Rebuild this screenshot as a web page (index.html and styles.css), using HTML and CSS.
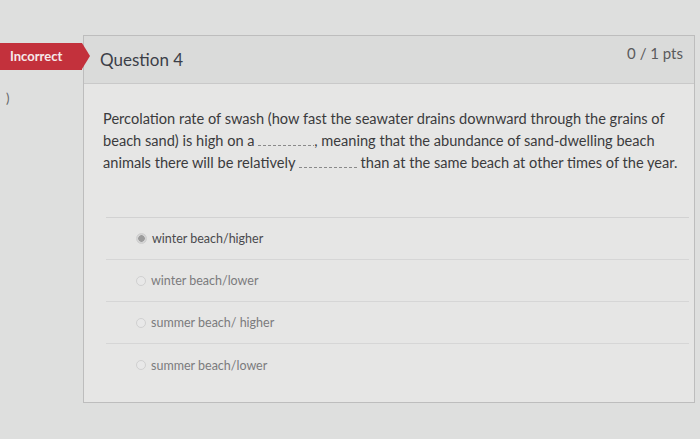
FILE: index.html
```html
<!DOCTYPE html>
<html>
<head>
<meta charset="utf-8">
<link rel="stylesheet" href="styles.css">
</head>
<body>
<div class="page">
  <div class="badge">Incorrect</div>
  <div class="side-mark">)</div>
  <div class="card">
    <div class="card-header">
      <div class="title">Question 4</div>
      <div class="pts">0 / 1 pts</div>
    </div>
    <div class="card-body">
      <p class="question">Percolation rate of swash (how fast the seawater drains downward through the grains of beach sand) is high on a <span class="blank"></span>, meaning that the abundance of sand-dwelling beach animals there will be relatively <span class="blank blank-2"></span> than at the same beach at other times of the year.</p>
      <div class="answers">
        <div class="answer selected"><span class="radio"></span><span class="label">winter beach/higher</span></div>
        <div class="answer"><span class="radio"></span><span class="label">winter beach/lower</span></div>
        <div class="answer"><span class="radio"></span><span class="label">summer beach/ higher</span></div>
        <div class="answer last"><span class="radio"></span><span class="label">summer beach/lower</span></div>
      </div>
    </div>
  </div>
</div>
</body>
</html>
```

FILE: styles.css
```css
html, body {
  margin: 0;
  padding: 0;
}
body {
  width: 700px;
  height: 439px;
  overflow: hidden;
  background: #dedfde;
  font-family: Lato, "Open Sans", sans-serif;
}
.page {
  position: relative;
  padding: 35px 5px 0 83px;
}
.badge {
  position: absolute;
  left: 0;
  top: 43px;
  width: 82px;
  height: 27px;
  background: #c3313c;
  color: #f6e9ea;
  font-size: 13px;
  font-weight: 700;
  line-height: 27px;
  padding-left: 10px;
  box-sizing: border-box;
  z-index: 2;
}
.badge::after {
  content: "";
  position: absolute;
  right: -8px;
  top: 0;
  border-top: 13.5px solid transparent;
  border-bottom: 13.5px solid transparent;
  border-left: 8px solid #c3313c;
}
.side-mark {
  position: absolute;
  left: 6px;
  top: 90px;
  color: #666;
  font-size: 13px;
}
.card {
  width: 612px;
  height: 368px;
  border: 1px solid #bdbdbd;
  background: #e6e6e5;
  box-sizing: border-box;
}
.card-header {
  height: 47px;
  background: #dadbda;
  border-bottom: 1px solid #c9c9c9;
  display: flex;
  justify-content: space-between;
  align-items: flex-start;
  padding: 0 11px 0 16px;
}
.title {
  margin-top: 13px;
  font-size: 17px;
  color: #3c3f48;
}
.pts {
  margin-top: 8px;
  font-size: 15px;
  color: #5a5a5c;
}
.card-body {
  padding: 24px 5px 0 19px;
}
.question {
  margin: 0;
  font-size: 14.6px;
  line-height: 22px;
  color: #3b3b3d;
}
.blank {
  display: inline-block;
  width: 56px;
  height: 1px;
  vertical-align: baseline;
  background: repeating-linear-gradient(to right, #8a8a8a 0 3px, transparent 3px 5px);
}
.blank-2 {
  width: 58px;
}
.answers {
  margin-top: 43px;
  margin-left: 3px;
  border-top: 1px solid #d2d2d2;
}
.answer {
  height: 42px;
  box-sizing: border-box;
  display: flex;
  align-items: center;
  padding-left: 30px;
  border-bottom: 1px solid #d6d6d6;
  color: #7b7b7d;
  font-size: 12.5px;
}
.answer.last {
  border-bottom: none;
}
.answer.selected {
  color: #4a4a4d;
}
.radio {
  width: 10px;
  height: 10px;
  border-radius: 50%;
  border: 1px solid #d0d0d0;
  background: #e8e8e8;
  box-sizing: border-box;
  margin-right: 5px;
}
.selected .radio {
  background: radial-gradient(circle, #9c9c9c 0 3px, #d4d4d4 3.5px);
  border-color: #cfcfcf;
  width: 11px;
  height: 11px;
}
```
